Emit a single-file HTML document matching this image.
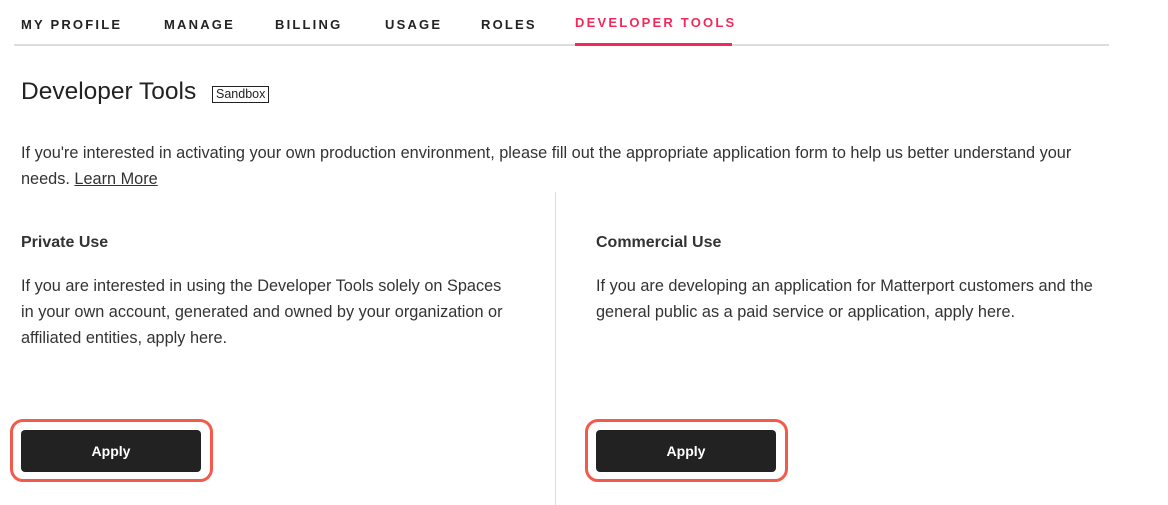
<!DOCTYPE html>
<html><head><style>
body{margin:0;width:1168px;height:505px;background:#fff;font-family:"Liberation Sans",sans-serif;color:#222;position:relative;overflow:hidden}
.nav{position:absolute;top:17px;font-size:13px;font-weight:bold;letter-spacing:2.2px;color:#222}
.line{position:absolute;left:14px;top:44px;width:1095px;height:2px;background:#ddd}
.pink{position:absolute;left:575px;top:43px;width:157px;height:3px;background:#f2295b}
h1{position:absolute;left:21px;top:78px;margin:0;font-size:24.5px;font-weight:normal;color:#222}
.sb{position:absolute;left:212px;top:86px;border:1px solid #222;font-size:12.5px;padding:0 3px;line-height:15px}
p{position:absolute;margin:0;font-size:16.3px;line-height:26px;color:#333}
h3{position:absolute;margin:0;font-size:16px;font-weight:bold;color:#333}
.vd{position:absolute;left:555px;top:192px;width:1px;height:313px;background:#ddd}
.ring{position:absolute;width:197px;height:57px;border:3px solid #f4594b;border-radius:13px}
.btn{position:absolute;width:180px;height:42px;background:#222;border-radius:4px;color:#fff;font-weight:bold;font-size:14px;text-align:center;line-height:42px}
</style></head><body>
<div class="nav" style="left:21px">MY PROFILE</div>
<div class="nav" style="left:164px">MANAGE</div>
<div class="nav" style="left:275px">BILLING</div>
<div class="nav" style="left:385px">USAGE</div>
<div class="nav" style="left:481px">ROLES</div>
<div class="nav" style="left:575px;top:15px;color:#f2295b">DEVELOPER TOOLS</div>
<div class="line"></div><div class="pink"></div>
<h1>Developer Tools</h1><div class="sb">Sandbox</div>
<p style="left:21px;top:140px;width:1100px">If you're interested in activating your own production environment, please fill out the appropriate application form to help us better understand your needs. <u>Learn More</u></p>
<div class="vd"></div>
<h3 style="left:21px;top:234px">Private Use</h3>
<p style="left:21px;top:273px;width:490px">If you are interested in using the Developer Tools solely on Spaces in your own account, generated and owned by your organization or affiliated entities, apply here.</p>
<h3 style="left:596px;top:234px">Commercial Use</h3>
<p style="left:596px;top:273px;width:530px">If you are developing an application for Matterport customers and the general public as a paid service or application, apply here.</p>
<div class="ring" style="left:10px;top:419px"></div>
<div class="btn" style="left:21px;top:430px">Apply</div>
<div class="ring" style="left:585px;top:419px"></div>
<div class="btn" style="left:596px;top:430px">Apply</div>
</body></html>
